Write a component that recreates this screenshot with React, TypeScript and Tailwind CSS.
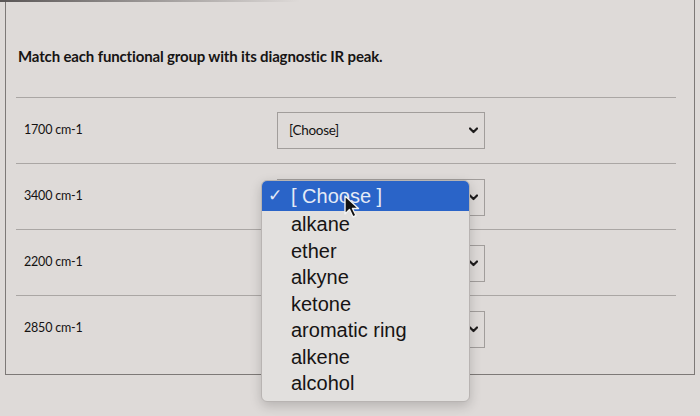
import React from "react";

const Chevron = () => (
  <svg width="9" height="7" viewBox="0 0 9 7" className="shrink-0">
    <path d="M1 1.5 L4.5 5 L8 1.5" fill="none" stroke="#1e1c1c" strokeWidth="2.2" strokeLinecap="round" strokeLinejoin="round" />
  </svg>
);

const rows = ["1700 cm-1", "3400 cm-1", "2200 cm-1", "2850 cm-1"];
const options = ["alkane", "ether", "alkyne", "ketone", "aromatic ring", "alkene", "alcohol"];

export default function App() {
  return (
    <div className="relative w-[700px] h-[416px] overflow-hidden bg-[#dedad8]" style={{ fontFamily: "Lato, 'Noto Sans', sans-serif" }}>
      <div className="absolute left-0 top-0 h-[2px] w-[300px] bg-gradient-to-r from-[#5a5656] to-transparent" />
      <div className="ml-[5px] w-[690px] h-[375px] border-l border-r border-b border-[#7d7977] flex flex-col">
        <div className="h-[97px] pl-[12px] pt-[46px]">
          <p className="text-[15px] font-bold text-[#161414] leading-[20px] tracking-[-0.15px]">
            Match each functional group with its diagnostic IR peak.
          </p>
        </div>
        {rows.map((r, i) => (
          <div key={r} className="ml-[10px] w-[660px] h-[66px] border-t border-[#aaa6a4] flex items-center">
            <div className="w-[261px] pl-[8px] text-[12.5px] text-[#141212] tracking-[-0.2px]">{r}</div>
            <div className={`w-[208px] h-[37px] border border-[#a19d9b] flex items-center justify-between pl-[11px] pr-[6px] ${i === 0 ? "" : "mt-[2px]"}`}>
              {i === 0 ? <span className="text-[13.5px] text-[#141212] tracking-[-0.3px]">[Choose]</span> : <span />}
              <Chevron />
            </div>
          </div>
        ))}
      </div>

      <div
        className="absolute left-[261px] top-[180px] w-[209px] h-[222px] rounded-[6px] bg-[#e2e0de] border border-[#b8b4b2] shadow-[0_4px_12px_rgba(0,0,0,0.18)] overflow-hidden"
        style={{ fontFamily: "'Liberation Sans', Arial, sans-serif" }}
      >
        <div className="h-[30px] bg-[#2a64c8] flex items-center text-[#e4eaf6] text-[20px]">
          <span className="w-[29px] pl-[6px] text-[17px]">✓</span>
          <span>[ Choose ]</span>
        </div>
        {options.map((o) => (
          <div key={o} className="h-[26.5px] flex items-center pl-[29px] text-[20px] text-[#161414]">
            {o}
          </div>
        ))}
      </div>

      <svg className="absolute left-[343px] top-[194px]" width="20" height="26" viewBox="0 0 20 26">
        <path d="M2 2 L2 20 L6.5 15.5 L10 23 L13 21.5 L9.5 14.5 L15.5 14.5 Z" fill="#111" stroke="#f2f2f2" strokeWidth="1.4" strokeLinejoin="round" />
      </svg>
    </div>
  );
}
